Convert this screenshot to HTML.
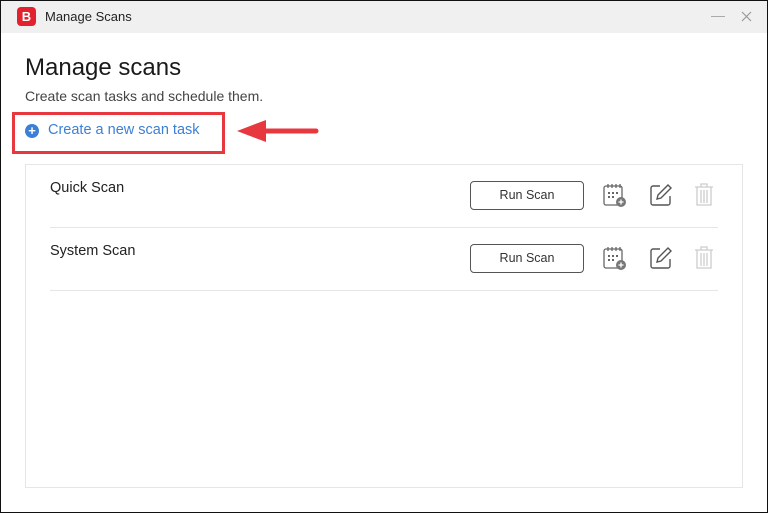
<!DOCTYPE html>
<html><head><style>
*{margin:0;padding:0;box-sizing:border-box}
body{width:768px;height:513px;overflow:hidden;background:#fff;font-family:"Liberation Sans",sans-serif;position:relative}
.frame{position:absolute;left:0;top:0;width:768px;height:513px;border:1px solid #111}
.tb{position:absolute;left:1px;top:1px;width:766px;height:32px;background:#f0f0f0}
.logo{position:absolute;left:17px;top:7px;width:19px;height:19px;background:#e2202e;border-radius:4px;color:#fff;font-weight:bold;font-size:13px;text-align:center;line-height:19px}
.t{position:absolute;color:#222}
.panel{position:absolute;left:25px;top:164px;width:718px;height:324px;border:1px solid #e6e6e6}
.hr{position:absolute;left:50px;width:668px;height:1px;background:#e6e6e6}
.btn{position:absolute;left:470px;width:114px;height:29px;border:1px solid #555;border-radius:4px;font-size:12.5px;text-align:center;line-height:27px;color:#333}
svg{position:absolute}
</style></head><body>
<div class="tb"></div>
<div class="logo">B</div>
<div class="t" style="left:45px;top:9px;font-size:13px">Manage Scans</div>
<div style="position:absolute;left:711px;top:16px;width:14px;height:1px;background:#aaa"></div>
<svg style="left:741px;top:11px" width="11" height="11"><path d="M1 1L10 10M10 1L1 10" stroke="#999" stroke-width="1.2"/></svg>
<div class="t" style="left:25px;top:54px;font-size:24px;color:#1a1a1a">Manage scans</div>
<div class="t" style="left:25px;top:88px;font-size:14px;color:#444">Create scan tasks and schedule them.</div>
<div style="position:absolute;left:12px;top:112px;width:213px;height:42px;border:3px solid #e8383f"></div>
<div style="position:absolute;left:25px;top:124px;width:14px;height:14px;border-radius:50%;background:#3c7fd6;color:#fff;font-size:13px;font-weight:bold;line-height:14px;text-align:center">+</div>
<div class="t" style="left:48px;top:122px;font-size:14.5px;color:#3c7fd6">Create a new scan task</div>
<svg style="left:234px;top:118px" width="90" height="28"><path d="M30 13H82" stroke="#e8383f" stroke-width="5" stroke-linecap="round"/><path d="M3 13L32 2V24Z" fill="#e8383f"/></svg>
<div class="panel"></div>
<div class="t" style="left:50px;top:180px;font-size:14.5px">Quick Scan</div>
<div class="t" style="left:50px;top:243px;font-size:14.5px">System Scan</div>
<div class="hr" style="top:227px"></div>
<div class="hr" style="top:290px"></div>
<div class="btn" style="top:181px">Run Scan</div>
<div class="btn" style="top:244px">Run Scan</div>
<svg style="left:602px;top:182px" width="26" height="28"><g fill="none" stroke="#666" stroke-width="1.3"><rect x="2" y="4" width="18" height="19" rx="2"/><path d="M6 2v4M10 2v4M14 2v4M18 2v4"/></g><g fill="#666"><rect x="6" y="10" width="2" height="2"/><rect x="10" y="10" width="2" height="2"/><rect x="14" y="10" width="2" height="2"/><rect x="6" y="14" width="2" height="2"/><rect x="10" y="14" width="2" height="2"/></g><circle cx="19" cy="20" r="5" fill="#777"/><path d="M19 17.5v5M16.5 20h5" stroke="#fff" stroke-width="1.3"/></svg>
<svg style="left:602px;top:245px" width="26" height="28"><g fill="none" stroke="#666" stroke-width="1.3"><rect x="2" y="4" width="18" height="19" rx="2"/><path d="M6 2v4M10 2v4M14 2v4M18 2v4"/></g><g fill="#666"><rect x="6" y="10" width="2" height="2"/><rect x="10" y="10" width="2" height="2"/><rect x="14" y="10" width="2" height="2"/><rect x="6" y="14" width="2" height="2"/><rect x="10" y="14" width="2" height="2"/></g><circle cx="19" cy="20" r="5" fill="#777"/><path d="M19 17.5v5M16.5 20h5" stroke="#fff" stroke-width="1.3"/></svg>
<svg style="left:648px;top:182px" width="26" height="26"><g fill="none" stroke="#555" stroke-width="1.4"><path d="M12 4H5a2 2 0 0 0-2 2v15a2 2 0 0 0 2 2h15a2 2 0 0 0 2-2v-7"/><path d="M9 17l1-4 10-10 3 3-10 10z"/></g></svg>
<svg style="left:648px;top:245px" width="26" height="26"><g fill="none" stroke="#555" stroke-width="1.4"><path d="M12 4H5a2 2 0 0 0-2 2v15a2 2 0 0 0 2 2h15a2 2 0 0 0 2-2v-7"/><path d="M9 17l1-4 10-10 3 3-10 10z"/></g></svg>
<svg style="left:693px;top:182px" width="22" height="26"><g fill="none" stroke="#ccc" stroke-width="1.3"><path d="M2 5h18M8 5V2h6v3"/><path d="M4 5v18h14V5M8 8v13M11 8v13M14 8v13"/></g></svg>
<svg style="left:693px;top:245px" width="22" height="26"><g fill="none" stroke="#ccc" stroke-width="1.3"><path d="M2 5h18M8 5V2h6v3"/><path d="M4 5v18h14V5M8 8v13M11 8v13M14 8v13"/></g></svg>
<div class="frame"></div>
</body></html>
